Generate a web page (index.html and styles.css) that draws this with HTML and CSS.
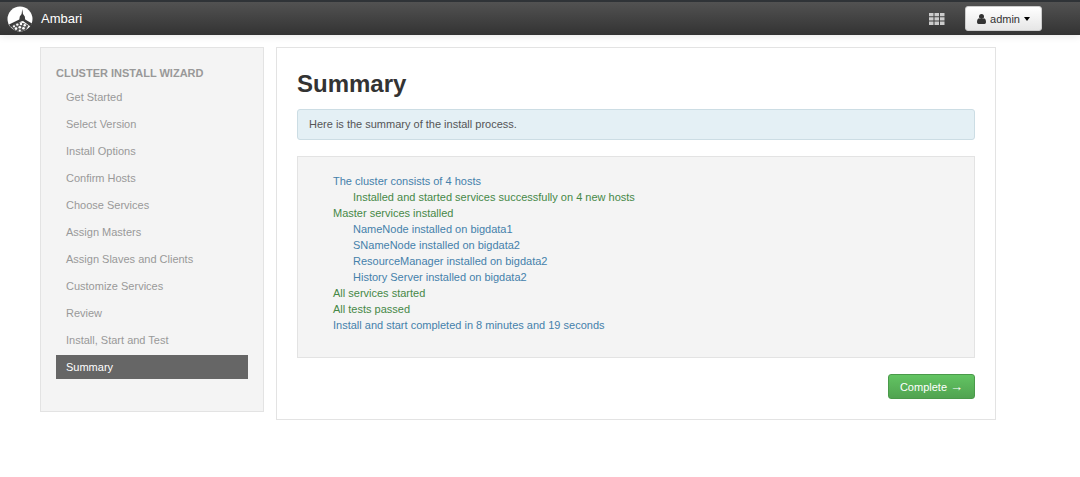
FILE: index.html
```html
<!DOCTYPE html>
<html lang="en">
<head>
    <meta charset="UTF-8">
    <meta name="viewport" content="width=device-width, initial-scale=1.0">
    <title>Ambari</title>
    <link rel="stylesheet" href="styles.css">
</head>
<body>
    <header class="navbar">
        <a class="brand" href="#">
            <svg class="logo" viewBox="0 0 26 26" aria-hidden="true">
                <circle cx="13" cy="13" r="12.5" fill="#fff"/>
                <!-- spire and roof -->
                <path d="M15.300 3l.7 5 1.800 2.500.4 3L25 17.500l-1.500 3-7.500-5.500-2 .5-10 6-2-3 10.300-5 .5-3L14.600 8z" fill="#3c3c3c"/>
                <!-- lattice -->
                <path d="M4 20.500Q12 13 21.500 19.500L19 24q-6 3-12 0z" fill="#555"/>
                <g fill="#fff">
                    <circle cx="7" cy="20.300" r="1.100"/>
                    <circle cx="10.300" cy="18.600" r="1.200"/>
                    <circle cx="14" cy="18" r="1.200"/>
                    <circle cx="17.700" cy="19.200" r="1.200"/>
                    <circle cx="9" cy="22.600" r="1.300"/>
                    <circle cx="12.800" cy="21.300" r="1.300"/>
                    <circle cx="16.500" cy="22.300" r="1.300"/>
                    <circle cx="12.800" cy="24.500" r="1.100"/>
                </g>
            </svg>
            <span>Ambari</span>
        </a>

        <div class="nav-right">
            <a class="views-link" href="#" aria-label="Views">
                <svg class="icon-views" viewBox="0 0 16 12" aria-hidden="true">
                    <path d="M0 0h4.500v3.300H0zM5.500 0H10v3.300H5.500zM11 0h4.500v3.300H11zM0 4.300h4.500v3.300H0zM5.500 4.300H10v3.300H5.500zM11 4.300h4.500v3.300H11zM0 8.600h4.500v3.300H0zM5.500 8.600H10v3.300H5.500zM11 8.600h4.500v3.300H11z" fill="#ccc"/>
                </svg>
            </a>
            <button type="button" class="btn btn-user">
                <svg class="icon-user" viewBox="0 0 9 10" aria-hidden="true">
                    <circle cx="4.500" cy="2.600" r="2.500" fill="#333"/>
                    <path d="M2 4.200q2.500 1.800 5 0 2 .5 2 4 0 1.800-1.500 1.800h-6Q0 10 0 8.200q0-3.500 2-4z" fill="#333"/>
                </svg>
                admin
                <span class="caret"></span>
            </button>
        </div>
    </header>

    <div class="container">
        <!-- Wizard steps -->
        <nav class="sidebar">
            <h2 class="nav-header">Cluster Install Wizard</h2>
            <ul class="steps">
                <li><a href="#">Get Started</a></li>
                <li><a href="#">Select Version</a></li>
                <li><a href="#">Install Options</a></li>
                <li><a href="#">Confirm Hosts</a></li>
                <li><a href="#">Choose Services</a></li>
                <li><a href="#">Assign Masters</a></li>
                <li><a href="#">Assign Slaves and Clients</a></li>
                <li><a href="#">Customize Services</a></li>
                <li><a href="#">Review</a></li>
                <li><a href="#">Install, Start and Test</a></li>
                <li class="active"><a href="#" aria-current="step">Summary</a></li>
            </ul>
        </nav>

        <!-- Step content -->
        <main class="content">
            <h1>Summary</h1>
            <div class="alert">Here is the summary of the install process.</div>

            <div class="summary">
                <ul>
                    <li class="info">The cluster consists of 4 hosts
                        <ul>
                            <li class="success">Installed and started services successfully on 4 new hosts</li>
                        </ul>
                    </li>
                    <li class="success">Master services installed
                        <ul>
                            <li class="info">NameNode installed on bigdata1</li>
                            <li class="info">SNameNode installed on bigdata2</li>
                            <li class="info">ResourceManager installed on bigdata2</li>
                            <li class="info">History Server installed on bigdata2</li>
                        </ul>
                    </li>
                    <li class="success">All services started</li>
                    <li class="success">All tests passed</li>
                    <li class="info">Install and start completed in 8 minutes and 19 seconds</li>
                </ul>
            </div>

            <div class="actions">
                <button type="button" class="btn btn-success">Complete <span class="arrow">&rarr;</span></button>
            </div>
        </main>
    </div>
</body>
</html>
```
FILE: styles.css
```css
* {
    box-sizing: border-box;
}

body {
    margin: 0;
    font-family: "Liberation Sans", Arial, sans-serif;
    font-size: 11px;
    line-height: 16px;
    color: #333;
    background-color: #fff;
}

ul {
    list-style: none;
    margin: 0;
    padding: 0;
}

a {
    text-decoration: none;
}

/* Top bar */
.navbar {
    display: flex;
    justify-content: space-between;
    align-items: center;
    height: 35px;
    padding: 0 38px 0 7px;
    border-top: 2px solid #2f3337;
    background-image: linear-gradient(#525252, #333);
    box-shadow: 0 1px 8px rgba(0, 0, 0, 0.1);
}

.brand {
    display: flex;
    align-items: center;
    gap: 8px;
    font-size: 13px;
    color: #fff;
}

.logo {
    width: 26px;
    height: 26px;
}

.nav-right {
    display: flex;
    align-items: center;
    gap: 20px;
}

.icon-views {
    display: block;
    width: 16px;
    height: 12px;
}

.btn {
    display: flex;
    align-items: center;
    height: 25px;
    padding: 0 11px;
    font-family: inherit;
    font-size: 11px;
    line-height: 16px;
    border-radius: 3px;
    cursor: pointer;
}

.btn-user {
    gap: 4px;
    color: #333;
    border: 1px solid #ccc;
    background-image: linear-gradient(#fff, #e6e6e6);
}

.icon-user {
    width: 9px;
    height: 10px;
}

.caret {
    border-top: 4px solid #000;
    border-left: 3px solid transparent;
    border-right: 3px solid transparent;
}

/* Page columns */
.container {
    display: flex;
    align-items: flex-start;
    gap: 12px;
    padding: 12px 84px 40px 40px;
}

.sidebar {
    flex: 0 0 224px;
    padding: 17px 15px 32px;
    border: 1px solid #e3e3e3;
    background-color: #f4f4f4;
}

.nav-header {
    margin: 0 0 4px;
    font-size: 11px;
    line-height: 16px;
    text-transform: uppercase;
    color: #999;
}

.steps {
    display: flex;
    flex-direction: column;
    gap: 3px;
}

.steps a {
    display: block;
    padding: 4px 10px;
    color: #999;
}

.steps .active a {
    color: #fff;
    background-color: #666;
}

.content {
    flex: 1;
    min-width: 0;
    padding: 20px;
    border: 1px solid #e3e3e3;
}

h1 {
    margin: 0 0 9px;
    font-size: 24px;
    line-height: 32px;
}

.alert {
    padding: 6px 11px 7px;
    border: 1px solid #ccdde4;
    border-radius: 3px;
    color: #555;
    background-color: #e4f0f5;
}

.summary {
    margin: 16px 0;
    padding: 16px 35px 24px;
    border: 1px solid #e3e3e3;
    background-color: #f4f4f4;
}

.summary ul ul {
    padding-left: 20px;
}

.info {
    color: #4581ab;
}

.success {
    color: #468847;
}

.actions {
    display: flex;
    justify-content: flex-end;
}

.btn-success {
    gap: 3px;
    color: #fff;
    border: 1px solid #4a9a4a;
    background-image: linear-gradient(#62c462, #51a351);
}

.arrow {
    font-size: 13px;
}
```
